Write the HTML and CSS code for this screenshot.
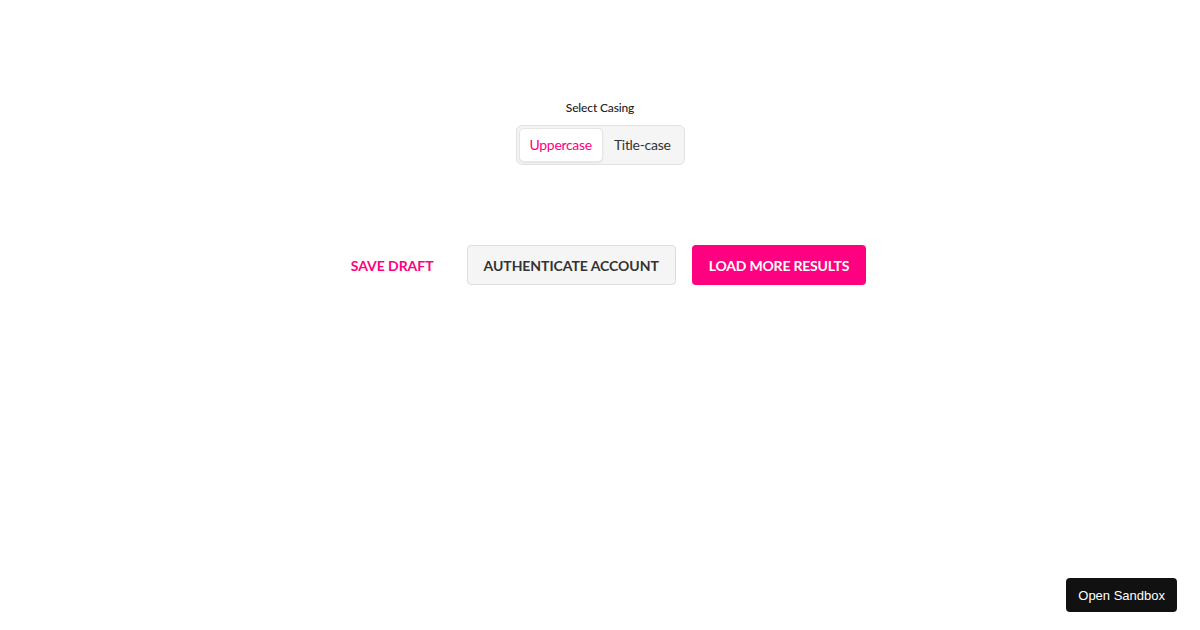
FILE: index.html
```html
<!DOCTYPE html>
<html>
<head>
<meta charset="utf-8">
<link rel="stylesheet" href="styles.css">
</head>
<body>
<main class="page">
  <section class="casing">
    <div class="casing-label">Select Casing</div>
    <div class="segmented">
      <button class="seg seg-active">Uppercase</button>
      <button class="seg">Title-case</button>
    </div>
  </section>
  <section class="actions">
    <button class="btn btn-text">SAVE DRAFT</button>
    <button class="btn btn-outline">AUTHENTICATE ACCOUNT</button>
    <button class="btn btn-solid">LOAD MORE RESULTS</button>
  </section>
</main>
<button class="sandbox">Open Sandbox</button>
</body>
</html>
```
FILE: styles.css
```css
* { box-sizing: border-box; }
html, body { margin: 0; padding: 0; background: #fff; }
body { font-family: Lato, "Noto Sans", sans-serif; width: 1200px; height: 630px; position: relative; overflow: hidden; }
.page { display: flex; flex-direction: column; align-items: center; padding-top: 100px; }
.casing { display: flex; flex-direction: column; align-items: center; gap: 10px; }
.casing-label { font-size: 12px; line-height: 15px; color: #222; font-weight: 500; letter-spacing: -0.15px; }
.segmented { display: flex; padding: 2px; background: #f5f5f5; border: 1px solid #e2e2e2; border-radius: 6px; height: 40px; }
.seg { font-family: inherit; font-size: 14px; line-height: 16px; letter-spacing: -0.3px; border: 1px solid transparent; background: transparent; color: #333; padding: 0 10px 1px; border-radius: 5px; height: 34px; cursor: pointer; }
.seg-active { background: #fff; color: #ff0080; border-color: #e6e6e6; box-shadow: 0 1px 2px rgba(0,0,0,0.08); }
.actions { display: flex; gap: 16px; margin-top: 80px; }
.btn { font-family: inherit; font-size: 14px; font-weight: 700; height: 40px; padding: 0 16px; border-radius: 4px; border: 1px solid transparent; cursor: pointer; letter-spacing: -0.05px; }
.btn-text { background: transparent; color: #ff0080; }
.btn-outline { background: #f5f5f5; border-color: #dddddd; color: #333; }
.btn-solid { background: #ff0080; color: #fff; letter-spacing: -0.2px; }
.sandbox { position: absolute; right: 23px; bottom: 18px; height: 34px; padding: 0 12px; background: #111; color: #fff; border: none; border-radius: 4px; font-family: "Liberation Sans", Arial, sans-serif; font-size: 13px; }
```
